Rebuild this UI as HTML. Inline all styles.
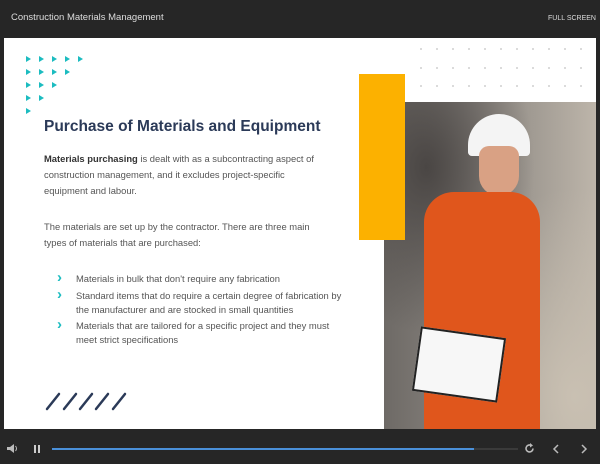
<!DOCTYPE html>
<html><head><style>
*{margin:0;padding:0;box-sizing:border-box}
body{width:600px;height:464px;background:#262626;position:relative;overflow:hidden;font-family:"Liberation Sans",sans-serif}
.top{position:absolute;left:11px;top:12px;color:#ddd;font-size:9.5px}
.fs{position:absolute;right:4px;top:15px;color:#ddd;font-size:7px}
.slide{position:absolute;left:4px;top:38px;width:592px;height:391px;background:#fff;overflow:hidden}
.tri{position:absolute;width:0;height:0;border-left:5px solid #1cbcc0;border-top:3px solid transparent;border-bottom:3px solid transparent}
h1{position:absolute;left:40px;top:80px;font-size:15.5px;color:#2b3a58;font-weight:bold;white-space:nowrap}
.p{position:absolute;left:40px;font-size:9.4px;line-height:16px;color:#555;width:285px}
.li{position:absolute;left:72px;font-size:9.4px;line-height:13.5px;color:#555;width:270px}
.chev{position:absolute;left:-19px;top:-1px;color:#1cbcc0;font-weight:bold;font-size:15px;line-height:13.5px}
.photo{position:absolute;left:380px;top:64px;width:212px;height:327px;background:linear-gradient(90deg,#6e6a66,#8a8580 40%,#a19b93 70%,#bdb5aa);overflow:hidden}
.yel{position:absolute;left:355px;top:36px;width:46px;height:166px;background:#fcb100}
</style></head><body>
<div class="top">Construction Materials Management</div>
<div class="fs">FULL SCREEN</div>
<div class="slide">
<div class="tri" style="left:22px;top:18px"></div><div class="tri" style="left:35px;top:18px"></div><div class="tri" style="left:48px;top:18px"></div><div class="tri" style="left:61px;top:18px"></div><div class="tri" style="left:74px;top:18px"></div>
<div class="tri" style="left:22px;top:31px"></div><div class="tri" style="left:35px;top:31px"></div><div class="tri" style="left:48px;top:31px"></div><div class="tri" style="left:61px;top:31px"></div>
<div class="tri" style="left:22px;top:44px"></div><div class="tri" style="left:35px;top:44px"></div><div class="tri" style="left:48px;top:44px"></div>
<div class="tri" style="left:22px;top:57px"></div><div class="tri" style="left:35px;top:57px"></div>
<div class="tri" style="left:22px;top:70px"></div>
<h1>Purchase of Materials and Equipment</h1>
<div class="p" style="top:113px"><b style="color:#333">Materials purchasing</b> is dealt with as a subcontracting aspect of construction management, and it excludes project-specific equipment and labour.</div>
<div class="p" style="top:181px">The materials are set up by the contractor. There are three main types of materials that are purchased:</div>
<div class="li" style="top:234px"><span class="chev">›</span>Materials in bulk that don't require any fabrication</div>
<div class="li" style="top:251px"><span class="chev">›</span>Standard items that do require a certain degree of fabrication by the manufacturer and are stocked in small quantities</div>
<div class="li" style="top:281px"><span class="chev">›</span>Materials that are tailored for a specific project and they must meet strict specifications</div>
<svg style="position:absolute;left:40px;top:352px" width="90" height="22"><g stroke="#2b3a58" stroke-width="2.5" stroke-linecap="round"><line x1="3" y1="19" x2="15" y2="4"/><line x1="20" y1="19" x2="32" y2="4"/><line x1="36" y1="19" x2="48" y2="4"/><line x1="52" y1="19" x2="64" y2="4"/><line x1="69" y1="19" x2="81" y2="4"/></g></svg>
<div class="photo">
<div style="position:absolute;left:0;top:0;width:212px;height:327px;background:radial-gradient(ellipse at 20% 20%,#4a4644 0,transparent 45%),radial-gradient(ellipse at 90% 90%,#c9c0b2 0,transparent 50%)"></div>
<div style="position:absolute;left:84px;top:12px;width:62px;height:42px;background:#f4f4f4;border-radius:32px 32px 4px 4px"></div>
<div style="position:absolute;left:95px;top:44px;width:40px;height:50px;background:#d9a184;border-radius:10px 10px 20px 20px"></div>
<div style="position:absolute;left:40px;top:90px;width:116px;height:240px;background:#e0561c;border-radius:30px 30px 0 0"></div>
<div style="position:absolute;left:32px;top:230px;width:86px;height:65px;background:#f7f7f7;border:2px solid #222;transform:rotate(8deg)"></div>
</div>
<div class="yel"></div>
</div>
<div style="position:absolute;left:405px;top:38px;width:191px;height:64px;background:#fff">
<svg width="191" height="64"><g fill="#d0d0d0">
<circle cx="16" cy="11" r="1"/><circle cx="32" cy="11" r="1"/><circle cx="48" cy="11" r="1"/><circle cx="64" cy="11" r="1"/><circle cx="80" cy="11" r="1"/><circle cx="96" cy="11" r="1"/><circle cx="112" cy="11" r="1"/><circle cx="128" cy="11" r="1"/><circle cx="144" cy="11" r="1"/><circle cx="160" cy="11" r="1"/><circle cx="176" cy="11" r="1"/>
<circle cx="16" cy="30" r="1"/><circle cx="32" cy="30" r="1"/><circle cx="48" cy="30" r="1"/><circle cx="64" cy="30" r="1"/><circle cx="80" cy="30" r="1"/><circle cx="96" cy="30" r="1"/><circle cx="112" cy="30" r="1"/><circle cx="128" cy="30" r="1"/><circle cx="144" cy="30" r="1"/><circle cx="160" cy="30" r="1"/><circle cx="176" cy="30" r="1"/>
<circle cx="16" cy="48" r="1"/><circle cx="32" cy="48" r="1"/><circle cx="48" cy="48" r="1"/><circle cx="64" cy="48" r="1"/><circle cx="80" cy="48" r="1"/><circle cx="96" cy="48" r="1"/><circle cx="112" cy="48" r="1"/><circle cx="128" cy="48" r="1"/><circle cx="144" cy="48" r="1"/><circle cx="160" cy="48" r="1"/><circle cx="176" cy="48" r="1"/>
</g></svg></div>
<svg style="position:absolute;left:6px;top:443px" width="12" height="11"><path d="M1 4h3l4-3v9l-4-3H1z" fill="#bbb"/><path d="M9.5 3q2 2.5 0 5" stroke="#bbb" fill="none"/></svg>
<div style="position:absolute;left:34px;top:445px;width:2px;height:8px;background:#ccc"></div>
<div style="position:absolute;left:38px;top:445px;width:2px;height:8px;background:#ccc"></div>
<div style="position:absolute;left:52px;top:448px;width:466px;height:2px;background:#3a3a3a"></div>
<div style="position:absolute;left:52px;top:448px;width:422px;height:2px;background:#4a90d9"></div>
<svg style="position:absolute;left:524px;top:443px" width="11" height="11"><path d="M9 5.5A3.5 3.5 0 1 1 7 2.3" stroke="#bbb" stroke-width="1.6" fill="none"/><path d="M6 0l3 2.5-3 2z" fill="#bbb"/></svg>
<svg style="position:absolute;left:552px;top:444px" width="8" height="10"><path d="M6 1L2 5l4 4" stroke="#bbb" stroke-width="1.5" fill="none"/></svg>
<svg style="position:absolute;left:580px;top:444px" width="8" height="10"><path d="M2 1l4 4-4 4" stroke="#bbb" stroke-width="1.5" fill="none"/></svg>
</body></html>
